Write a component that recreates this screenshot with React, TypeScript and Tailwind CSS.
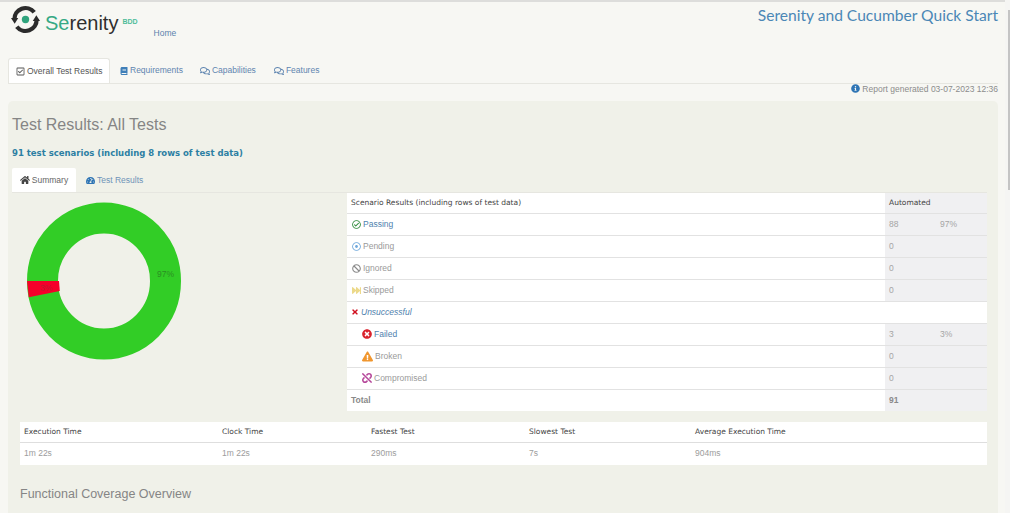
import {
  FaBan,
  FaBook,
  FaExclamationTriangle,
  FaFastForward,
  FaHome,
  FaInfoCircle,
  FaRegCheckCircle,
  FaRegCheckSquare,
  FaRegComments,
  FaRegDotCircle,
  FaTachometerAlt,
  FaTimes,
  FaTimesCircle,
  FaUnlink,
} from "react-icons/fa";
import type { ReactNode } from "react";

const arial = "font-['Liberation_Sans',Arial,sans-serif]";
const verdana = "font-['DejaVu_Sans',Verdana,sans-serif]";

function Logo() {
  return (
    <svg width="29" height="29" viewBox="0 0 30 30" className="shrink-0">
      <path d="M3.5 15A11.5 11.5 0 0 1 24 7.5" fill="none" stroke="#2b2b2b" strokeWidth="4.4" />
      <path d="M26.5 15A11.5 11.5 0 0 1 6 22.5" fill="none" stroke="#2b2b2b" strokeWidth="4.4" />
      <path d="M0 13.5l7.5 0-3.7 6z" fill="#2b2b2b" />
      <path d="M30 16.5l-7.5 0 3.7-6z" fill="#2b2b2b" />
      <circle cx="15" cy="15" r="3.8" fill="#2fa37c" />
    </svg>
  );
}

function Row({
  icon,
  label,
  count,
  pct,
  indent,
  link,
}: {
  icon: ReactNode;
  label: string;
  count: string;
  pct?: string;
  indent?: boolean;
  link?: boolean;
}) {
  return (
    <div className="flex h-[22px] border-b border-[#e2e2e2]">
      <div className={`flex w-[538px] items-center gap-[2px] bg-white pb-[1px] ${indent ? "pl-[15px]" : "pl-[5px]"}`}>
        {icon}
        <span className={link ? "text-[#4f7fae]" : "text-[#9a9a9a]"}>{label}</span>
      </div>
      <div className="flex flex-1 items-center bg-[#f0f0f2] pb-[1px] pl-[4px] text-[#a5a5a5]">
        <span className="w-[51px]">{count}</span>
        <span>{pct}</span>
      </div>
    </div>
  );
}

function Donut() {
  return (
    <svg width="154" height="160" viewBox="0 0 154 160" preserveAspectRatio="none" className="block">
      <ellipse cx="77" cy="80" rx="61.5" ry="63" fill="none" stroke="#32cd26" strokeWidth="31" />
      <path d="M0 80L32 80L32.8 90L1.8 96.3Z" fill="#f5002a" />
      <text x="130" y="76" fontSize="8.5" fill="#2a8f22" fontFamily="Liberation Sans">97%</text>
      <text x="13" y="90" fontSize="8.5" fill="#c01830" fontFamily="Liberation Sans">3%</text>
    </svg>
  );
}

export default function App() {
  const stats = [
    ["Execution Time", "1m 22s", "w-[198px]"],
    ["Clock Time", "1m 22s", "w-[149px]"],
    ["Fastest Test", "290ms", "w-[158px]"],
    ["Slowest Test", "7s", "w-[166px]"],
    ["Average Execution Time", "904ms", "flex-1"],
  ];

  return (
    <div className={`flex h-[513px] w-[1010px] overflow-hidden bg-[#f7f7f3] text-[8.5px] ${arial}`}>
      <div className="flex w-[1005px] flex-col">
        <div className="h-[2px] bg-[#dddddb]" />

        <header className="flex h-[56px] justify-between pl-[11px] pr-[7px]">
          <div className="flex items-start pt-[3px]">
            <Logo />
            <span className="ml-[5px] mt-[6px] text-[20px] leading-[24px] text-[#2f2f2f]">
              <span className="text-[#36a985]">Se</span>renity
            </span>
            <span className="ml-[4px] mt-[12px] text-[7px] font-bold leading-[9px] text-[#4fbd9a]">BDD</span>
            <a className="ml-[16px] mt-[22px] leading-[12px] text-[#5b82ad]">Home</a>
          </div>
          <h1 className="mt-[2px] text-[15.6px] leading-[22px] text-[#4b87b6] font-['Lato',sans-serif]">
            Serenity and Cucumber Quick Start
          </h1>
        </header>

        <nav className="ml-[8px] mr-[7px] flex h-[26px] border-b border-[#e6e6e0]">
          <div className="flex h-[25px] w-[102px] items-center gap-[2px] rounded-t-[3px] border border-b-0 border-[#e6e6e0] bg-white pl-[7px] text-[#555]">
            <FaRegCheckSquare className="text-[9px]" />
            Overall Test Results
          </div>
          <div className="flex h-[25px] items-center gap-[2px] pl-[10px] text-[#5f85b0]">
            <FaBook className="text-[8px] text-[#3f7fb8]" />
            Requirements
          </div>
          <div className="flex h-[25px] items-center gap-[2px] pl-[17px] text-[#5f85b0]">
            <FaRegComments className="text-[10px]" />
            Capabilities
          </div>
          <div className="flex h-[25px] items-center gap-[2px] pl-[18px] text-[#5f85b0]">
            <FaRegComments className="text-[10px]" />
            Features
          </div>
        </nav>

        <div className="mr-[7px] flex h-[17px] items-start justify-end gap-[2px] text-[#8c8c8c]">
          <FaInfoCircle className="text-[9px] text-[#2f75b5]" />
          <span className="leading-[10px]">Report generated 03-07-2023 12:36</span>
        </div>

        <main className="ml-[8px] mr-[7px] flex-1 rounded-t-[5px] bg-[#f0f1e9] pl-[4px] pr-[11px]">
          <h2 className="mt-[13px] text-[16px] leading-[22px] text-[#858585]">Test Results: All Tests</h2>
          <p className={`mt-[10px] text-[8.5px] font-bold leading-[14px] text-[#2c7fa3] ${verdana}`}>
            91 test scenarios (including 8 rows of test data)
          </p>

          <div className="mt-[8px] flex h-[25px] border-b border-[#e6e6e0]">
            <div className="flex w-[64px] items-center justify-center gap-[2px] rounded-t-[2px] bg-white text-[#666]">
              <FaHome className="text-[10px] text-[#444]" />
              Summary
            </div>
            <div className="flex items-center gap-[2px] pl-[10px] text-[#6f93b8]">
              <FaTachometerAlt className="text-[9px] text-[#2f75b5]" />
              Test Results
            </div>
          </div>

          <div className="flex">
            <div className="w-[335px] pl-[15px] pt-[8px]">
              <Donut />
            </div>
            <div className="w-[640px]">
              <div className={`flex h-[21px] border-b border-[#e2e2e2] text-[7.5px] text-[#444] ${verdana}`}>
                <div className="flex w-[538px] items-center bg-white pl-[4px]">
                  Scenario Results (including rows of test data)
                </div>
                <div className="flex flex-1 items-center bg-[#f0f0f2] pl-[4px]">Automated</div>
              </div>
              <Row link label="Passing" count="88" pct="97%" icon={<FaRegCheckCircle className="text-[9px] text-[#2e8b3a]" />} />
              <Row label="Pending" count="0" icon={<FaRegDotCircle className="text-[9px] text-[#6fa8dc]" />} />
              <Row label="Ignored" count="0" icon={<FaBan className="text-[9px] text-[#8a8a8a]" />} />
              <Row label="Skipped" count="0" icon={<FaFastForward className="text-[9px] text-[#ecd98a]" />} />
              <div className="flex h-[22px] items-center gap-[2px] border-b border-[#e2e2e2] bg-white pb-[1px] pl-[4px] italic text-[#4f7fae]">
                <FaTimes className="text-[8px] text-[#d01020]" />
                Unsuccessful
              </div>
              <Row indent link label="Failed" count="3" pct="3%" icon={<FaTimesCircle className="text-[10px] text-[#d9232e]" />} />
              <Row indent label="Broken" count="0" icon={<FaExclamationTriangle className="text-[11px] text-[#f0962e]" />} />
              <Row indent label="Compromised" count="0" icon={<FaUnlink className="text-[10px] text-[#b5479a]" />} />
              <div className="flex h-[21px] font-bold text-[#8a8a8a]">
                <div className="flex w-[538px] items-center bg-white pl-[4px]">Total</div>
                <div className="flex flex-1 items-center bg-[#f0f0f2] pl-[4px]">91</div>
              </div>
            </div>
          </div>

          <div className="ml-[8px] mt-[11px] w-[967px] bg-white">
            <div className={`flex h-[21px] items-center border-b border-[#dedede] pl-[4px] text-[7.5px] text-[#444] ${verdana}`}>
              {stats.map(([name, , w]) => (
                <span key={name} className={w}>
                  {name}
                </span>
              ))}
            </div>
            <div className="flex h-[22px] items-center pb-[1px] pl-[4px] text-[#9c9c9c]">
              {stats.map(([name, value, w]) => (
                <span key={name} className={w}>
                  {value}
                </span>
              ))}
            </div>
          </div>

          <h3 className="ml-[8px] mt-[20px] text-[12.5px] leading-[18px] text-[#858585]">Functional Coverage Overview</h3>
        </main>
      </div>

      <div className="w-[5px] bg-[#f5f5f3] pl-[3px] pt-[10px]">
        <div className="h-[180px] bg-[#c4c4c4]" />
      </div>
    </div>
  );
}
